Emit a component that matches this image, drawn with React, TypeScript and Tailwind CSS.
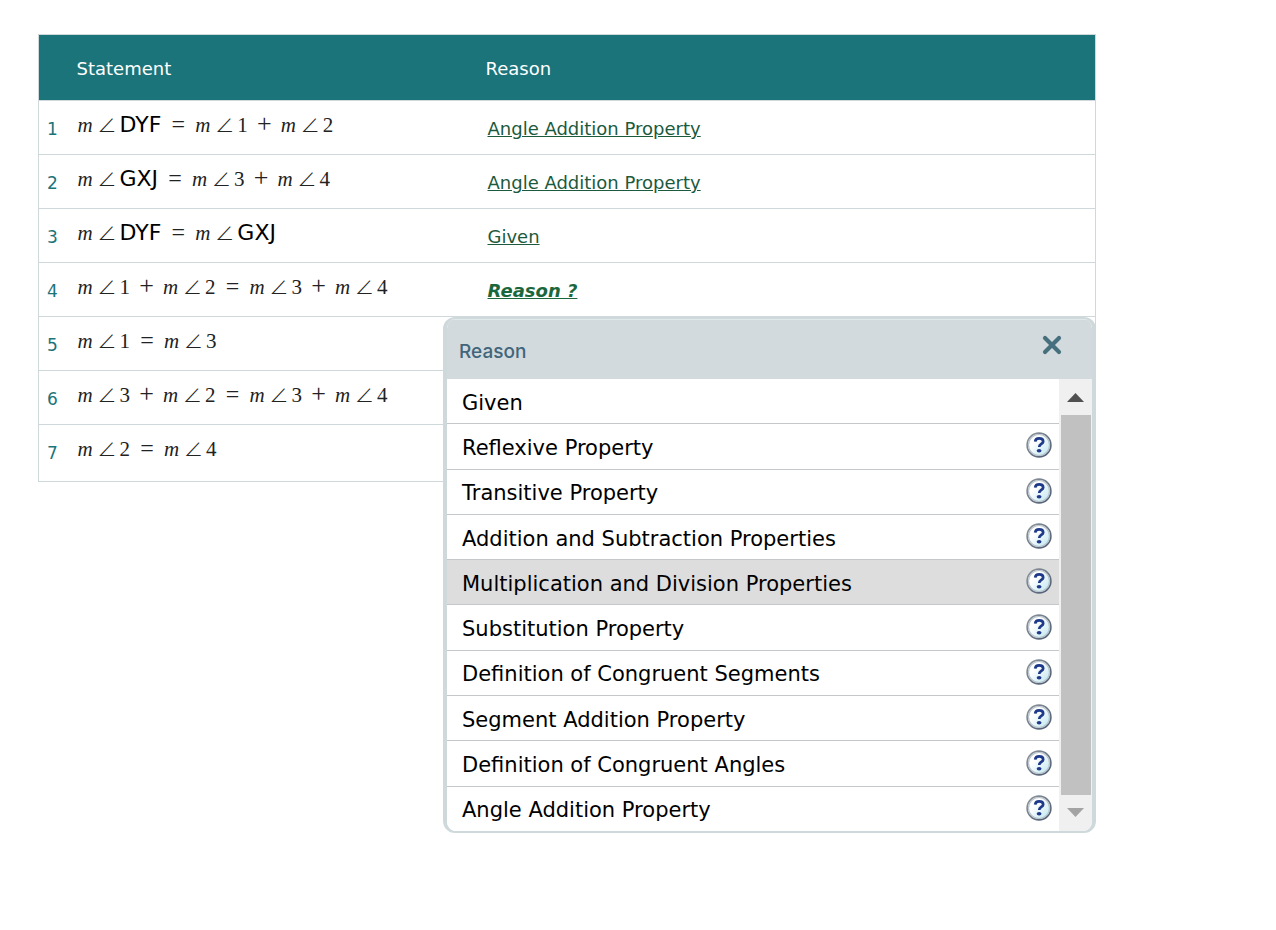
import { useState } from 'react';

interface ProofRow {
  statement: string[];
  reason?: string;
  pending?: boolean;
}

interface ReasonOption {
  label: string;
  help: boolean;
}

const rows: ProofRow[] = [
  { statement: ['DYF', '=', '1', '+', '2'], reason: 'Angle Addition Property' },
  { statement: ['GXJ', '=', '3', '+', '4'], reason: 'Angle Addition Property' },
  { statement: ['DYF', '=', 'GXJ'], reason: 'Given' },
  { statement: ['1', '+', '2', '=', '3', '+', '4'], reason: 'Reason ?', pending: true },
  { statement: ['1', '=', '3'] },
  { statement: ['3', '+', '2', '=', '3', '+', '4'] },
  { statement: ['2', '=', '4'] },
];

const options: ReasonOption[] = [
  { label: 'Given', help: false },
  { label: 'Reflexive Property', help: true },
  { label: 'Transitive Property', help: true },
  { label: 'Addition and Subtraction Properties', help: true },
  { label: 'Multiplication and Division Properties', help: true },
  { label: 'Substitution Property', help: true },
  { label: 'Definition of Congruent Segments', help: true },
  { label: 'Segment Addition Property', help: true },
  { label: 'Definition of Congruent Angles', help: true },
  { label: 'Angle Addition Property', help: true },
];

/** Angle measures joined by operators: every item that is not + or = gets "m∠" in front. */
function Statement({ items }: { items: string[] }) {
  return (
    <span className="flex items-baseline pl-px font-['Liberation_Serif',serif] text-[21px] leading-6 text-[#222]">
      {items.map((item, i) => {
        if (item === '+' || item === '=') {
          return (
            <span
              key={i}
              className={item === '+' ? 'w-[33px] text-center text-[26px] leading-6' : 'w-[34px] text-center text-[24px] leading-6'}
            >
              {item}
            </span>
          );
        }
        const named = item.length > 1;
        return (
          <span key={i} className="flex items-baseline">
            <i className="w-5">m</i>
            <span className="flex w-[22px]">
              <span className="pb-1 font-['Noto_Sans_CJK_JP',sans-serif] text-[19px] leading-5 font-light">∠</span>
            </span>
            <span className={named ? "font-['DejaVu_Sans',sans-serif] text-[22px] leading-6 text-black" : ''}>
              {item}
            </span>
          </span>
        );
      })}
    </span>
  );
}

function HelpIcon() {
  return (
    <svg viewBox="0 0 26 26" className="size-[26px]" aria-hidden="true">
      <defs>
        <linearGradient id="help-face" x1="0" y1="0" x2="1" y2="1">
          <stop offset="0.35" stopColor="#ffffff" />
          <stop offset="1" stopColor="#b5e3ee" />
        </linearGradient>
        <linearGradient id="help-ring" x1="0" y1="0" x2="1" y2="1">
          <stop offset="0" stopColor="#8f969c" />
          <stop offset="1" stopColor="#4c5a70" />
        </linearGradient>
      </defs>
      <circle cx="13" cy="13" r="11.9" fill="url(#help-face)" stroke="url(#help-ring)" strokeWidth="1.6" />
      <circle cx="13" cy="13" r="10.5" fill="none" stroke="#b9c4cc" strokeWidth="1.2" />
      <path
        d="M9.2 9.6C9.4 7.3 10.9 6.4 13.1 6.4C15.500 6.400 17.200 7.500 17.200 9.400C17.200 12 13.200 11.900 13.200 15"
        fill="none"
        stroke="#1f3a8a"
        strokeWidth="2.7"
      />
      <ellipse cx="13.1" cy="18.8" rx="2.4" ry="1.7" fill="#1f3a8a" />
    </svg>
  );
}

export default function App() {
  const [open, setOpen] = useState(true);
  const [hovered, setHovered] = useState(4);

  return (
    <main className="min-h-screen bg-white pt-[34px] pr-[180px] pl-[38px] font-['DejaVu_Sans',sans-serif]">
      <div className="relative">
        <table className="w-full table-fixed border-collapse border border-[#cfd9db] text-left text-[18px] leading-6">
          <thead>
            <tr className="h-[66px] bg-[#1b747a] text-white">
              <th className="w-[38px]" aria-label="Step"></th>
              <th className="w-[409px] pt-0.5 font-normal">Statement</th>
              <th className="pt-0.5 font-normal">Reason</th>
            </tr>
          </thead>
          <tbody>
            {rows.map((row, i) => (
              <tr key={i} className="h-[54px] border-t border-[#cfd9db] last:h-[57px]">
                <td className="pt-4 pl-2 align-top text-[17px] text-[#1b747a]">{i + 1}</td>
                <td className="pt-[11px] align-top">
                  <Statement items={row.statement} />
                </td>
                <td className="pt-4 pl-0.5 align-top">
                  {row.reason && (
                    <a
                      href="#reason"
                      onClick={() => setOpen(true)}
                      className={
                        row.pending ? 'font-bold text-[#1b673d] italic underline' : 'text-[#1b5a3d] underline'
                      }
                    >
                      {row.reason}
                    </a>
                  )}
                </td>
              </tr>
            ))}
          </tbody>
        </table>

        {open && (
          <section
            id="reason"
            aria-label="Reason"
            className="absolute top-[283px] right-0 left-[405px] overflow-hidden rounded-xl border-2 border-r-4 border-l-4 border-[#cfd9db] bg-white"
          >
            <header className="flex h-[60px] items-start justify-between border-t border-[#e2e9ea] bg-[#d2dadd] pt-[15px] pr-[30px] pl-3">
              <h2 className="pt-[5px] font-['Inter',sans-serif] text-[19px] leading-6 font-medium text-[#41657a]">
                Reason
              </h2>
              <button type="button" aria-label="Close" onClick={() => setOpen(false)}>
                <svg viewBox="0 0 20 20" className="size-5" aria-hidden="true">
                  <path d="M3 3L17 17M17 3L3 17" stroke="#47707f" strokeWidth="4.2" strokeLinecap="round" />
                </svg>
              </button>
            </header>
            <div className="flex h-[452px]">
              <ul className="flex flex-1 flex-col divide-y divide-[#c4c8ca]">
                {options.map((option, i) => (
                  <li
                    key={option.label}
                    onMouseEnter={() => setHovered(i)}
                    className={
                      hovered === i
                        ? 'flex flex-1 items-center bg-[#dddddd] pr-[7px] pl-[15px]'
                        : 'flex flex-1 items-center bg-white pr-[7px] pl-[15px]'
                    }
                  >
                    <button type="button" className="flex-1 pt-[3px] text-left text-[21px] leading-7 text-black">
                      {option.label}
                    </button>
                    {option.help && (
                      <button type="button" aria-label={`Help: ${option.label}`} className="pb-0.5">
                        <HelpIcon />
                      </button>
                    )}
                  </li>
                ))}
              </ul>
              <div className="flex w-[33px] flex-col items-center bg-[#f0f0f0]" aria-hidden="true">
                <svg viewBox="0 0 33 36" className="h-9 w-full">
                  <path d="M8 23L16.5 14L25 23Z" fill="#505050" />
                </svg>
                <div className="w-[30px] flex-1 bg-[#c1c1c1]" />
                <svg viewBox="0 0 33 36" className="h-9 w-full">
                  <path d="M8 13L16.5 22L25 13Z" fill="#a3a3a3" />
                </svg>
              </div>
            </div>
            <div className="absolute top-[170px] -right-1 h-[70px] w-px rounded-full bg-[#a3b8bd]" aria-hidden="true" />
          </section>
        )}
      </div>
    </main>
  );
}
